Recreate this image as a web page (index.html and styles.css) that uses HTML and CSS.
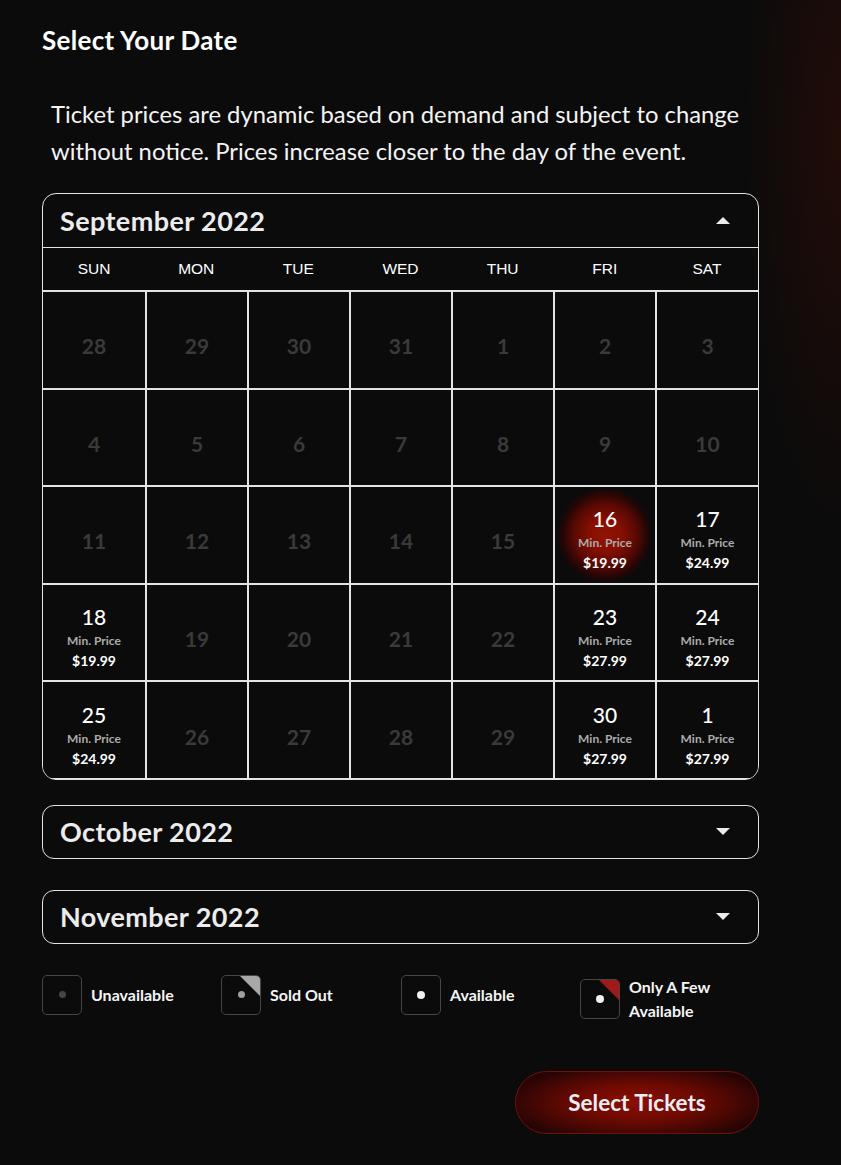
FILE: index.html
```html
<!DOCTYPE html>
<html>
<head>
<meta charset="utf-8">
<link rel="stylesheet" href="styles.css">
</head>
<body>
<div class="page">
  <h1 class="title">Select Your Date</h1>
  <p class="intro">Ticket prices are dynamic based on demand and subject to change without notice. Prices increase closer to the day of the event.</p>

  <div class="cal">
    <div class="cal-head">
      <span class="month">September 2022</span>
      <span class="caret up"></span>
    </div>
    <div class="dow">
      <span>SUN</span><span>MON</span><span>TUE</span><span>WED</span><span>THU</span><span>FRI</span><span>SAT</span>
    </div>
    <div class="grid">
      <div class="cell off"><span class="n">28</span></div>
      <div class="cell off"><span class="n">29</span></div>
      <div class="cell off"><span class="n">30</span></div>
      <div class="cell off"><span class="n">31</span></div>
      <div class="cell off"><span class="n">1</span></div>
      <div class="cell off"><span class="n">2</span></div>
      <div class="cell off"><span class="n">3</span></div>

      <div class="cell off"><span class="n">4</span></div>
      <div class="cell off"><span class="n">5</span></div>
      <div class="cell off"><span class="n">6</span></div>
      <div class="cell off"><span class="n">7</span></div>
      <div class="cell off"><span class="n">8</span></div>
      <div class="cell off"><span class="n">9</span></div>
      <div class="cell off"><span class="n">10</span></div>

      <div class="cell off"><span class="n">11</span></div>
      <div class="cell off"><span class="n">12</span></div>
      <div class="cell off"><span class="n">13</span></div>
      <div class="cell off"><span class="n">14</span></div>
      <div class="cell off"><span class="n">15</span></div>
      <div class="cell on sel"><span class="n">16</span><span class="lbl">Min. Price</span><span class="price">$19.99</span></div>
      <div class="cell on"><span class="n">17</span><span class="lbl">Min. Price</span><span class="price">$24.99</span></div>

      <div class="cell on"><span class="n">18</span><span class="lbl">Min. Price</span><span class="price">$19.99</span></div>
      <div class="cell off"><span class="n">19</span></div>
      <div class="cell off"><span class="n">20</span></div>
      <div class="cell off"><span class="n">21</span></div>
      <div class="cell off"><span class="n">22</span></div>
      <div class="cell on"><span class="n">23</span><span class="lbl">Min. Price</span><span class="price">$27.99</span></div>
      <div class="cell on"><span class="n">24</span><span class="lbl">Min. Price</span><span class="price">$27.99</span></div>

      <div class="cell on"><span class="n">25</span><span class="lbl">Min. Price</span><span class="price">$24.99</span></div>
      <div class="cell off"><span class="n">26</span></div>
      <div class="cell off"><span class="n">27</span></div>
      <div class="cell off"><span class="n">28</span></div>
      <div class="cell off"><span class="n">29</span></div>
      <div class="cell on"><span class="n">30</span><span class="lbl">Min. Price</span><span class="price">$27.99</span></div>
      <div class="cell on"><span class="n">1</span><span class="lbl">Min. Price</span><span class="price">$27.99</span></div>
    </div>
  </div>

  <div class="month-bar">
    <span class="month">October 2022</span>
    <span class="caret down"></span>
  </div>
  <div class="month-bar">
    <span class="month">November 2022</span>
    <span class="caret down"></span>
  </div>

  <div class="legend">
    <div class="item">
      <span class="key"><span class="dot dot-un"></span></span>
      <span class="ltxt">Unavailable</span>
    </div>
    <div class="item">
      <span class="key"><span class="corner corner-gray"></span><span class="dot dot-sold"></span></span>
      <span class="ltxt">Sold Out</span>
    </div>
    <div class="item">
      <span class="key"><span class="dot dot-av"></span></span>
      <span class="ltxt">Available</span>
    </div>
    <div class="item">
      <span class="key"><span class="corner corner-red"></span><span class="dot dot-av"></span></span>
      <span class="ltxt">Only A Few<br>Available</span>
    </div>
  </div>

  <div class="actions">
    <button class="btn">Select Tickets</button>
  </div>
</div>
</body>
</html>
```

FILE: styles.css
```css
html, body {
  margin: 0;
  padding: 0;
}
body {
  background-color: #0b0b0b;
  background-image: radial-gradient(ellipse 100px 400px at 100% 140px, rgba(55, 13, 6, 0.5), rgba(11, 11, 11, 0) 100%);
  background-repeat: no-repeat;
  min-height: 1165px;
  color: #f2f2f2;
  font-family: Lato, "Liberation Sans", sans-serif;
}
.page {
  width: 717px;
  padding: 25px 0 0 42px;
}
.title {
  margin: 0;
  font-size: 26px;
  font-weight: 700;
  line-height: 30px;
  letter-spacing: 0.3px;
  color: #fff;
}
.intro {
  margin: 41px 0 0 9px;
  font-size: 23.8px;
  line-height: 37px;
  font-weight: 400;
  color: #f4f4f4;
}
.cal {
  margin-top: 23px;
  border: 1px solid #e4e4e4;
  border-radius: 14px;
  overflow: hidden;
}
.cal-head, .month-bar {
  display: flex;
  align-items: center;
  justify-content: space-between;
  padding: 0 28px 0 17px;
}
.cal-head {
  height: 53px;
  border-bottom: 1px solid #e4e4e4;
}
.month {
  font-size: 27px;
  font-weight: 700;
  color: #ececec;
  letter-spacing: 0.4px;
}
.caret {
  width: 0;
  height: 0;
  border-left: 7px solid transparent;
  border-right: 7px solid transparent;
}
.caret.up {
  border-bottom: 7px solid #ececec;
}
.caret.down {
  border-top: 7px solid #ececec;
}
.dow {
  display: grid;
  grid-template-columns: repeat(7, 1fr);
  height: 42px;
  align-items: center;
  border-bottom: 2px solid #e4e4e4;
  font-family: "Liberation Sans", Arial, sans-serif;
  font-size: 15.5px;
  color: #fff;
  text-align: center;
}
.grid {
  display: grid;
  grid-template-columns: 102px repeat(5, 100px) 1fr;
  grid-auto-rows: 95.6px;
  gap: 2px;
  background: #e4e4e4;
  border-bottom: 1px solid #e4e4e4;
}
.cell {
  background: #0b0b0b;
  display: flex;
  flex-direction: column;
  align-items: center;
  justify-content: center;
  box-sizing: border-box;
}
.cell.off {
  padding-top: 12px;
}
.cell.off .n {
  font-size: 21px;
  font-weight: 700;
  color: #3a3a3a;
}
.cell.on {
  padding-top: 8px;
}
.cell.on .n {
  font-size: 21px;
  font-weight: 500;
  color: #fff;
  line-height: 26px;
}
.lbl {
  margin-top: 4px;
  font-size: 12px;
  font-weight: 700;
  color: #ababab;
  line-height: 14px;
}
.price {
  margin-top: 5px;
  font-size: 14px;
  font-weight: 700;
  color: #fff;
  line-height: 16px;
}
.cell.sel {
  background: radial-gradient(circle closest-side at 50% 50%, #931403 0%, #840f02 35%, #5a0903 65%, #240605 88%, #0b0b0b 100%);
}
.month-bar {
  height: 52px;
  border: 1px solid #e4e4e4;
  border-radius: 12px;
  margin-top: 25px;
}
.month-bar + .month-bar {
  margin-top: 31px;
}
.legend {
  display: grid;
  grid-template-columns: 179px 180px 179px 1fr;
  align-items: start;
  margin-top: 31px;
}
.item {
  display: flex;
  align-items: center;
  gap: 9px;
}
.key {
  position: relative;
  width: 38px;
  height: 38px;
  border: 1px solid #464646;
  border-radius: 5px;
  overflow: hidden;
  display: flex;
  align-items: center;
  justify-content: center;
  flex: none;
}
.dot {
  border-radius: 50%;
}
.dot-un {
  width: 7px;
  height: 7px;
  background: #454545;
}
.dot-sold {
  width: 7px;
  height: 7px;
  background: #9e9e9e;
}
.dot-av {
  width: 8px;
  height: 8px;
  background: #f0f0f0;
}
.corner {
  position: absolute;
  top: 0;
  right: 0;
  width: 0;
  height: 0;
  border-left: 20px solid transparent;
}
.corner-gray {
  border-top: 20px solid #a8a8a8;
}
.corner-red {
  border-top: 20px solid #a01a1a;
}
.ltxt {
  font-size: 16px;
  font-weight: 700;
  color: #f4f4f4;
  line-height: 24px;
}
.actions {
  display: flex;
  justify-content: flex-end;
  margin-top: 48px;
}
.btn {
  width: 244px;
  height: 63px;
  border-radius: 32px;
  border: 1px solid #6e1209;
  background: radial-gradient(ellipse 55% 65% at 50% 50%, #8c0e02 0%, #6e0a02 45%, #3a0604 85%, #240404 100%);
  color: #ececf4;
  font-family: Lato, "Liberation Sans", sans-serif;
  font-size: 22.5px;
  font-weight: 700;
  cursor: pointer;
}
```
